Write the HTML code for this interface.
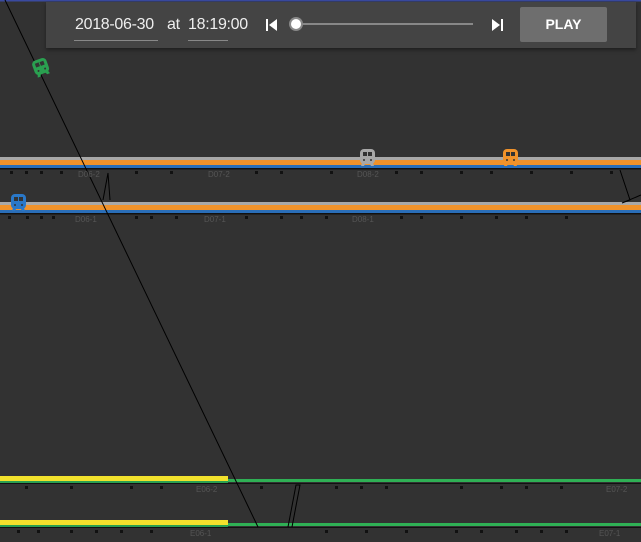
<!DOCTYPE html>
<html><head><style>
html,body{margin:0;padding:0;width:641px;height:542px;overflow:hidden;background:#323232;font-family:"Liberation Sans",sans-serif}
svg{position:absolute;left:0;top:0}
.bar{position:absolute;left:46px;top:2px;width:590px;height:46px;background:#444;box-shadow:0 2px 4px rgba(0,0,0,.4);color:#eee;font-size:16px}
.bar span{position:absolute;top:14px;letter-spacing:-0.3px}
.ul{position:absolute;height:1px;background:#888;top:38px}
.play{position:absolute;left:474px;top:5px;width:87px;height:35px;background:#6e6e6e;border-radius:2px;color:#fff;font-size:14px;font-weight:bold;text-align:center;line-height:35px}
</style></head><body>
<svg width="641" height="542">
<rect x="0" y="0" width="641" height="1.5" fill="#3a4aa0"/>
<rect x="0" y="157" width="641" height="3" fill="#a8a8a8"/>
<rect x="0" y="160" width="641" height="5" fill="#f0922a"/>
<rect x="0" y="165" width="641" height="3" fill="#2a6eb8"/>
<rect x="0" y="168" width="641" height="1.5" fill="#111"/>
<rect x="0" y="202" width="641" height="3" fill="#a8a8a8"/>
<rect x="0" y="205" width="641" height="5" fill="#f0922a"/>
<rect x="0" y="210" width="641" height="3" fill="#2a6eb8"/>
<rect x="0" y="213" width="641" height="1.5" fill="#111"/>
<rect x="0" y="476" width="228" height="5" fill="#f2e12c"/>
<rect x="0" y="481" width="228" height="2" fill="#2aa050"/>
<rect x="228" y="479" width="413" height="3" fill="#2fb055"/>
<rect x="0" y="483" width="641" height="1" fill="#111"/>
<rect x="0" y="520" width="228" height="5" fill="#f2e12c"/>
<rect x="0" y="525" width="228" height="2" fill="#2aa050"/>
<rect x="228" y="523" width="413" height="3" fill="#2fb055"/>
<rect x="0" y="527" width="641" height="1" fill="#111"/>
<g stroke="#000" fill="none" stroke-width="1">
<line x1="5" y1="0" x2="258" y2="527"/>
<path d="M103 200 L108 173 L110 200"/>
<path d="M288 527 L296 485 L300 485 L292 527"/>
<path d="M620 170 L630 200 L622 203 L641 195"/>
</g>
<g fill="#555" font-size="8" font-family="Liberation Sans">
<text x="78" y="177">D06-2</text><text x="208" y="177">D07-2</text><text x="357" y="177">D08-2</text>
<text x="75" y="222">D06-1</text><text x="204" y="222">D07-1</text><text x="352" y="222">D08-1</text>
<text x="196" y="492">E06-2</text><text x="606" y="492">E07-2</text>
<text x="190" y="536">E06-1</text><text x="599" y="536">E07-1</text>
</g>
<g fill="#111">
<path d="M10 171h3v3h-3zM25 171h3v3h-3zM40 171h3v3h-3zM60 171h3v3h-3zM135 171h3v3h-3zM170 171h3v3h-3zM255 171h3v3h-3zM280 171h3v3h-3zM330 171h3v3h-3zM395 171h3v3h-3zM420 171h3v3h-3zM460 171h3v3h-3zM490 171h3v3h-3zM530 171h3v3h-3zM570 171h3v3h-3zM610 171h3v3h-3z"/>
<path d="M8 216h3v3h-3zM26 216h3v3h-3zM40 216h3v3h-3zM52 216h3v3h-3zM135 216h3v3h-3zM150 216h3v3h-3zM175 216h3v3h-3zM245 216h3v3h-3zM280 216h3v3h-3zM300 216h3v3h-3zM325 216h3v3h-3zM400 216h3v3h-3zM420 216h3v3h-3zM460 216h3v3h-3zM495 216h3v3h-3zM525 216h3v3h-3zM565 216h3v3h-3z"/>
<path d="M25 486h3v3h-3zM70 486h3v3h-3zM130 486h3v3h-3zM160 486h3v3h-3zM260 486h3v3h-3zM335 486h3v3h-3zM360 486h3v3h-3zM385 486h3v3h-3zM460 486h3v3h-3zM500 486h3v3h-3zM525 486h3v3h-3zM560 486h3v3h-3z"/>
<path d="M17 530h3v3h-3zM37 530h3v3h-3zM70 530h3v3h-3zM95 530h3v3h-3zM120 530h3v3h-3zM150 530h3v3h-3zM325 530h3v3h-3zM365 530h3v3h-3zM405 530h3v3h-3zM455 530h3v3h-3zM480 530h3v3h-3zM515 530h3v3h-3zM540 530h3v3h-3zM565 530h3v3h-3z"/>
</g>
<defs>
<g id="tr"><rect x="0" y="0" width="15" height="15" rx="4"/><path d="M2 14 L1 17 H4 L5 15 H10 L11 17 H14 L13 14Z"/><rect x="3" y="3" width="4" height="4" fill="#333"/><rect x="8" y="3" width="4" height="4" fill="#333"/><circle cx="4" cy="11" r="1" fill="#333"/><circle cx="11" cy="11" r="1" fill="#333"/></g>
</defs>
<use href="#tr" x="360" y="149" fill="#a8a8a8"/>
<use href="#tr" x="503" y="149" fill="#f0922a"/>
<use href="#tr" x="11" y="194" fill="#2a78c8"/>
<use href="#tr" fill="#2aa050" transform="translate(31,62) rotate(-20)"/>
</svg>
<div class="bar">
<span style="left:29px">2018-06-30</span><div class="ul" style="left:28px;width:84px"></div>
<span style="left:121px">at</span>
<span style="left:142px">18:19:00</span><div class="ul" style="left:142px;width:40px"></div>
<svg width="16" height="16" style="left:219px;top:15px"><rect x="1" y="2" width="2" height="12" fill="#fff"/><path d="M12 2 L4 8 L12 14Z" fill="#fff"/></svg>
<div style="position:absolute;left:250px;top:21px;width:177px;height:2px;background:#888"></div>
<div style="position:absolute;left:245px;top:17px;width:10px;height:10px;border-radius:50%;background:#fff;box-shadow:0 0 0 2px #888"></div>
<svg width="16" height="16" style="left:443px;top:15px"><path d="M3 2 L11 8 L3 14Z" fill="#fff"/><rect x="12" y="2" width="2" height="12" fill="#fff"/></svg>
<div class="play">PLAY</div>
</div>
</body></html>
